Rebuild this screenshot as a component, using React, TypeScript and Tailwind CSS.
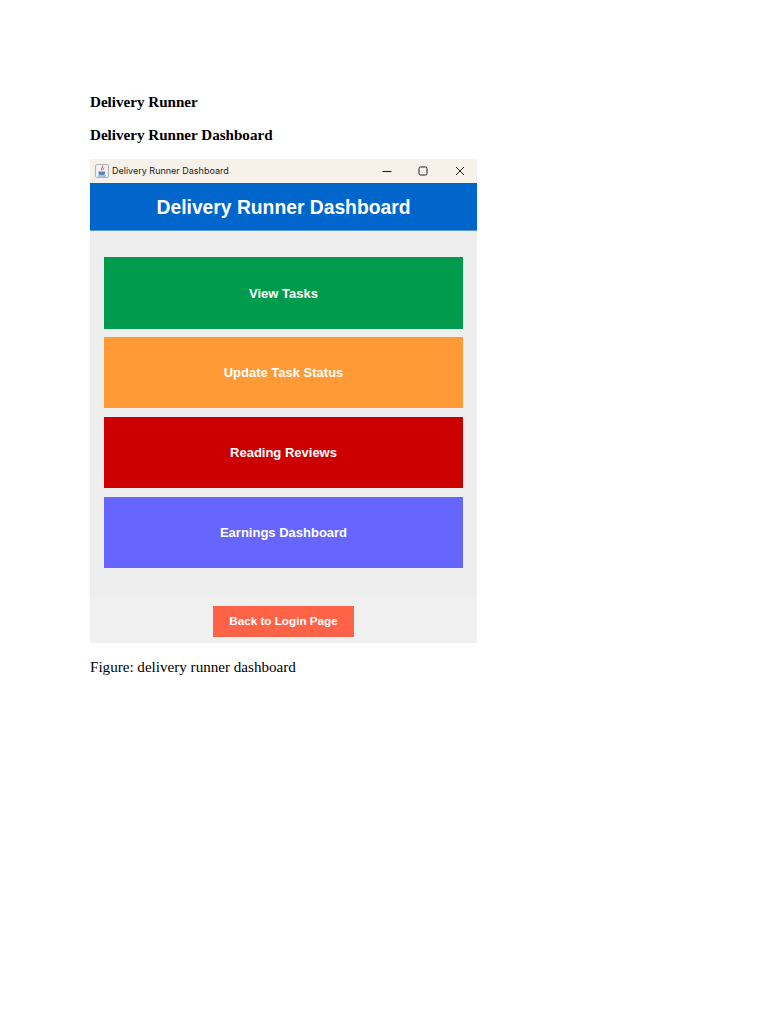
const SERIF = "font-['Liberation_Serif',serif]";

const ACTIONS = [
  { label: "View Tasks", color: "bg-[#009b4d]", size: "h-[72px] pt-[1px]" },
  { label: "Update Task Status", color: "bg-[#ff9a36]", size: "mt-[8px] h-[71px] pt-[1px]" },
  { label: "Reading Reviews", color: "bg-[#cc0000]", size: "mt-[9px] h-[71px] pt-[1px]" },
  { label: "Earnings Dashboard", color: "bg-[#6666ff]", size: "mt-[9px] h-[71px] pt-[1px]" },
];

function JavaIcon() {
  return (
    <div className="flex h-[14px] w-[14px] items-center justify-center rounded-[2px] border border-[#a9b4c2] bg-[#eef1f6]">
      <svg width="10" height="12" viewBox="0 0 10 12" fill="none">
        <path d="M5.5 0.5C6.5 2.2 3.8 3.2 4.6 5.2" stroke="#e0702a" strokeWidth="1.2" />
        <path d="M7.2 2.4C6.8 3.6 6 4 6.1 5.2" stroke="#e0702a" strokeWidth="0.9" />
        <path d="M1.5 6.5H8V8.4C8 9.4 7 10 6 10H3.5C2.5 10 1.5 9.4 1.5 8.4V6.5Z" fill="#5b86b5" />
        <path d="M1 11H9" stroke="#5b86b5" strokeWidth="0.9" />
      </svg>
    </div>
  );
}

function TitleBar() {
  return (
    <div className="flex h-[24px] items-center bg-[#f6f2ea] pl-[5px]">
      <JavaIcon />
      <span className="ml-[3px] font-['Inter',sans-serif] text-[9px] text-[#222222]">
        Delivery Runner Dashboard
      </span>
      <div className="ml-auto flex items-center">
        <div className="flex w-[32px] justify-center">
          <svg width="10" height="10" viewBox="0 0 10 10" fill="none">
            <path d="M0.5 5.5H9.5" stroke="#222222" strokeWidth="1.1" />
          </svg>
        </div>
        <div className="flex w-[40px] justify-center">
          <svg width="10" height="10" viewBox="0 0 10 10" fill="none">
            <rect x="1" y="1" width="8" height="8" rx="1.5" stroke="#222222" strokeWidth="1" />
          </svg>
        </div>
        <div className="flex w-[34px] justify-center">
          <svg width="10" height="10" viewBox="0 0 10 10" fill="none">
            <path d="M1 1L9 9M9 1L1 9" stroke="#222222" strokeWidth="1" />
          </svg>
        </div>
      </div>
    </div>
  );
}

export default function App() {
  return (
    <div className={`min-h-[1024px] bg-white pl-[90px] pt-[93px] text-black ${SERIF}`}>
      <h1 className="text-[15.1px] font-bold leading-[18px]">Delivery Runner</h1>
      <h2 className="mt-[15px] text-[15.1px] font-bold leading-[18px]">Delivery Runner Dashboard</h2>

      <div className="mt-[15px] w-[387px] font-['Liberation_Sans',sans-serif]">
        <TitleBar />
        <div className="flex h-[48px] items-center justify-center border-b border-[#5a9be0] bg-[#0066cc] pt-[3px] text-[19.3px] font-bold text-white">
          Delivery Runner Dashboard
        </div>
        <div className="flex h-[366px] flex-col bg-[#eeeeee] px-[14px] pt-[26px]">
          {ACTIONS.map((a) => (
            <div
              key={a.label}
              className={`flex shrink-0 items-center justify-center text-[13px] font-bold text-white ${a.color} ${a.size}`}
            >
              {a.label}
            </div>
          ))}
        </div>
        <div className="flex h-[46px] justify-center bg-[#f0f0f0] pt-[9px]">
          <div className="flex h-[31px] w-[141px] items-center justify-center bg-[#ff6347] pb-[1px] text-[11.7px] font-bold text-white">
            Back to Login Page
          </div>
        </div>
      </div>

      <p className="mt-[15px] text-[15.1px] leading-[18px]">Figure: delivery runner dashboard</p>
    </div>
  );
}
